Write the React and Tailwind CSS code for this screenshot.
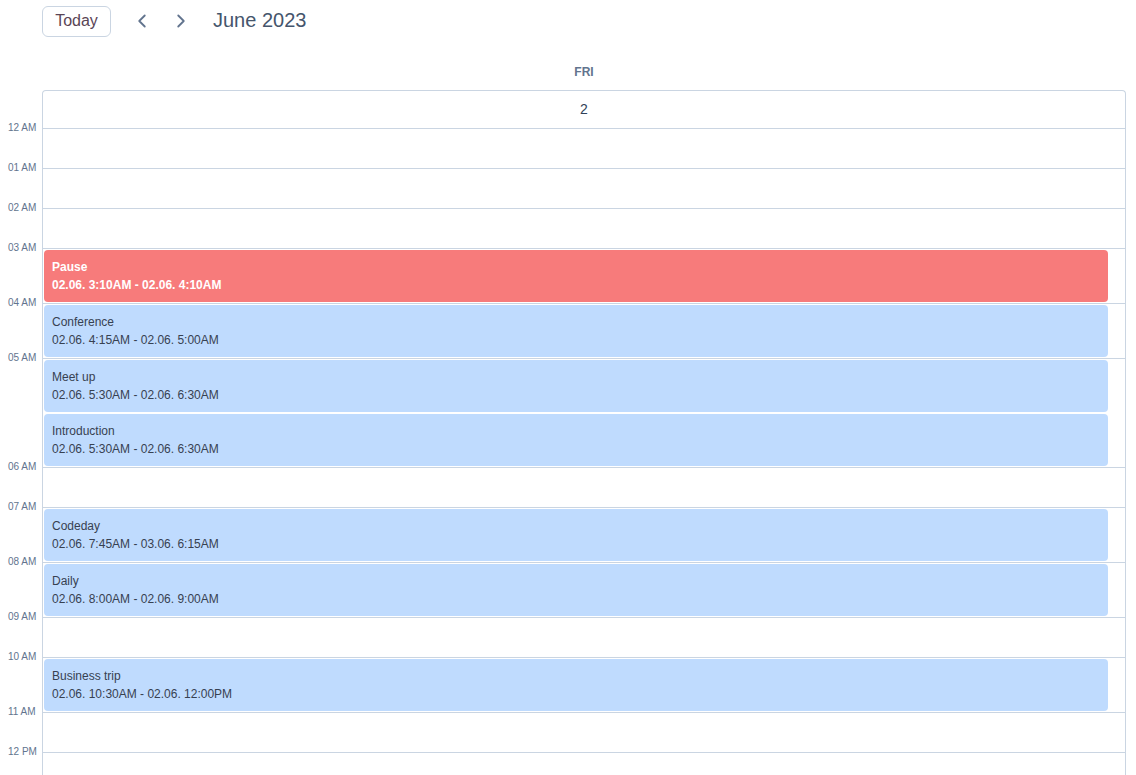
import { ChevronLeft, ChevronRight } from "lucide-react";

const hours = [
  "12 AM",
  "01 AM",
  "02 AM",
  "03 AM",
  "04 AM",
  "05 AM",
  "06 AM",
  "07 AM",
  "08 AM",
  "09 AM",
  "10 AM",
  "11 AM",
  "12 PM",
  "",
];

const events = {
  "03 AM": [{ title: "Pause", time: "02.06. 3:10AM - 02.06. 4:10AM", red: true }],
  "04 AM": [{ title: "Conference", time: "02.06. 4:15AM - 02.06. 5:00AM" }],
  "05 AM": [
    { title: "Meet up", time: "02.06. 5:30AM - 02.06. 6:30AM" },
    { title: "Introduction", time: "02.06. 5:30AM - 02.06. 6:30AM" },
  ],
  "07 AM": [{ title: "Codeday", time: "02.06. 7:45AM - 03.06. 6:15AM" }],
  "08 AM": [{ title: "Daily", time: "02.06. 8:00AM - 02.06. 9:00AM" }],
  "10 AM": [{ title: "Business trip", time: "02.06. 10:30AM - 02.06. 12:00PM" }],
};

function EventCard({ ev }) {
  return (
    <div
      className={
        ev.red
          ? "h-[52px] rounded px-2 pt-[8px] text-xs leading-[18px] bg-[#f77b7b] text-white font-bold"
          : "h-[52px] rounded px-2 pt-[8px] text-xs leading-[18px] bg-[#bfdbfe] text-[#374151]"
      }
    >
      <div>{ev.title}</div>
      <div>{ev.time}</div>
    </div>
  );
}

export default function App() {
  return (
    <div className="min-h-screen bg-white font-['Liberation_Sans',Arial,sans-serif] text-slate-600">
      <div className="flex h-[41px] items-start pl-[42px] pt-[6px]">
        <button className="h-[31px] w-[69px] rounded-md border border-slate-300 pb-px text-base text-[#5a4555]">
          Today
        </button>
        <div className="ml-[20px] flex h-[30px] items-center gap-[17px] text-slate-500">
          <ChevronLeft size={22} strokeWidth={2} />
          <ChevronRight size={22} strokeWidth={2} />
        </div>
        <div className="ml-[21px] flex h-[28px] items-center text-xl text-slate-600">June 2023</div>
      </div>

      <div className="flex h-[49px] pt-[23px]">
        <div className="w-[42px]" />
        <div className="mr-[10px] flex-1 text-center text-xs font-bold leading-4 text-slate-500">FRI</div>
      </div>

      <div className="flex">
        <div className="w-[42px]" />
        <div className="mr-[10px] flex h-[38px] flex-1 items-center justify-center rounded-t border-x border-t border-slate-300 pb-0.5 text-sm text-slate-700">
          2
        </div>
      </div>

      {hours.map((h, i) => (
        <div key={i} className="flex">
          <div className="w-[42px] shrink-0">
            <div className="-mt-[5px] pl-2 text-[10px] leading-none text-slate-500">{h}</div>
          </div>
          <div className="mr-[10px] flex min-h-[40px] flex-1 flex-col gap-0.5 border-x border-t border-slate-300 py-px pl-px pr-[17px]">
            {(events[h] || []).map((ev) => (
              <EventCard key={ev.title} ev={ev} />
            ))}
          </div>
        </div>
      ))}
    </div>
  );
}
